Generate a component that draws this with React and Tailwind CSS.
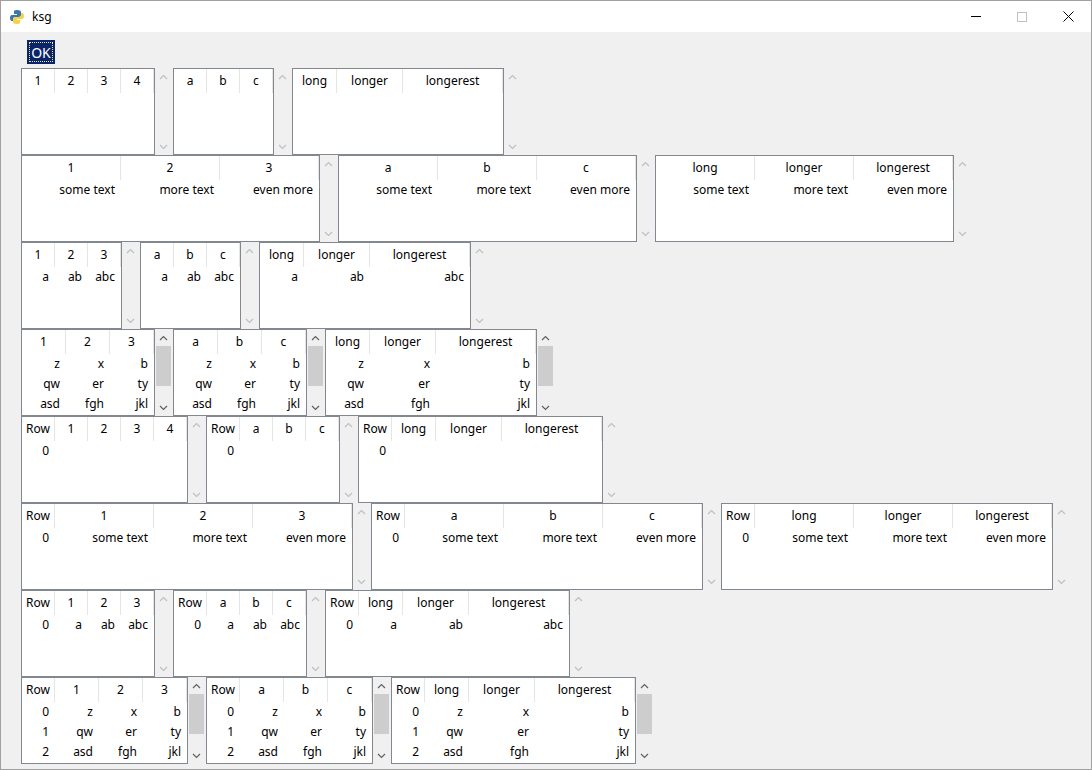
const H1 = [{ l: '1', w: 33 }, { l: '2', w: 33 }, { l: '3', w: 33 }, { l: '4', w: 33 }]
const A3 = [{ l: 'a', w: 33 }, { l: 'b', w: 33 }, { l: 'c', w: 33 }]
const N3 = [{ l: '1', w: 33 }, { l: '2', w: 33 }, { l: '3', w: 33 }]
const L3 = [{ l: 'long', w: 44 }, { l: 'longer', w: 66 }, { l: 'longerest', w: 100 }]
const wide = (c) => c.map((x) => ({ ...x, w: 99 }))
const mid = (c) => c.map((x) => ({ ...x, w: 44 }))
const ROW = { l: 'Row', w: 33 }
const withRow = (c) => [ROW, ...c]

const TEXT = [['some text', 'more text', 'even more']]
const SHORT = [['a', 'ab', 'abc']]
const MANY = [['z', 'x', 'b'], ['qw', 'er', 'ty'], ['asd', 'fgh', 'jkl']]
const idx = (rows) => rows.map((r, i) => [String(i), ...r])

const GRID = [
  [[H1, []], [A3, []], [L3, []]],
  [[wide(N3), TEXT], [wide(A3), TEXT], [wide(L3), TEXT]],
  [[N3, SHORT], [A3, SHORT], [L3, SHORT]],
  [[mid(N3), MANY, true], [mid(A3), MANY, true], [L3, MANY, true]],
  [[withRow(H1), [['0']]], [withRow(A3), [['0']]], [withRow(L3), [['0']]]],
  [[withRow(wide(N3)), idx(TEXT)], [withRow(wide(A3)), idx(TEXT)], [withRow(wide(L3)), idx(TEXT)]],
  [[withRow(N3), idx(SHORT)], [withRow(A3), idx(SHORT)], [withRow(L3), idx(SHORT)]],
  [[withRow(mid(N3)), idx(MANY), true], [withRow(mid(A3)), idx(MANY), true], [withRow(L3), idx(MANY), true]],
]

function Chevron({ up, active }) {
  return (
    <svg width="9" height="6" viewBox="0 0 9 6" fill="none" stroke={active ? '#606060' : '#bfbfbf'} strokeWidth="1.2">
      <path d={up ? 'M1 5 L4.5 1.5 L8 5' : 'M1 1 L4.5 4.5 L8 1'} />
    </svg>
  )
}

function Scrollbar({ active }) {
  return (
    <div className="w-[17px] h-[87px] bg-[#f0f0f0] flex flex-col items-center mr-[1px]">
      <div className="h-[17px] flex items-center justify-center"><Chevron up active={active} /></div>
      <div className="flex-1 w-full">
        {active && <div className="mx-[1px] h-[40px] bg-[#cdcdcd]" />}
      </div>
      <div className="h-[17px] flex items-center justify-center"><Chevron active={active} /></div>
    </div>
  )
}

function Table({ cols, rows, active }) {
  return (
    <div className="flex shrink-0">
      <div className="h-[87px] border border-[#828790] bg-white overflow-hidden">
        <div className="flex h-[24px]">
          {cols.map((c, i) => (
            <div key={i} style={{ width: c.w }} className="shrink-0 border-r border-[#e5e5e5] flex items-center justify-center">
              {c.l}
            </div>
          ))}
        </div>
        {rows.map((r, ri) => (
          <div key={ri} className="flex h-[20px]">
            {r.map((v, i) => (
              <div key={i} style={{ width: cols[i].w }} className="shrink-0 text-right pr-[6px] leading-[20px]">
                {v}
              </div>
            ))}
          </div>
        ))}
      </div>
      <Scrollbar active={active} />
    </div>
  )
}

export default function App() {
  return (
    <div className="w-[1092px] h-[770px] overflow-hidden border border-[#a0a0a0] bg-[#f0f0f0] text-[12px] text-black font-['Noto_Sans','Liberation_Sans',sans-serif]">
      <div className="h-[31px] bg-white flex items-center">
        <svg width="16" height="16" viewBox="0 0 16 16" className="ml-[8px]">
          <path d="M8 1c-3 0-3 1-3 2v2h3v1H3c-1.5 0-2 1.5-2 3s.5 3 2 3h1V10c0-1 1-2 2-2h4c1 0 2-1 2-2V3c0-1-1-2-4-2z" fill="#3b77a8" />
          <path d="M8 15c3 0 3-1 3-2v-2H8v-1h5c1.5 0 2-1.5 2-3s-.5-3-2-3h-1v2c0 1-1 2-2 2H6c-1 0-2 1-2 2v3c0 1 1 2 4 2z" fill="#f5d248" />
        </svg>
        <span className="ml-[7px] text-[12px]">ksg</span>
        <div className="ml-auto flex items-center h-full">
          <div className="w-[46px] flex justify-center"><div className="w-[10px] h-px bg-black" /></div>
          <div className="w-[46px] flex justify-center"><div className="w-[10px] h-[10px] border border-[#c0c0c0]" /></div>
          <div className="w-[46px] flex justify-center">
            <svg width="11" height="11" viewBox="0 0 11 11" stroke="#000" strokeWidth="1"><path d="M0.5 0.5 L10.5 10.5 M10.5 0.5 L0.5 10.5" /></svg>
          </div>
        </div>
      </div>
      <div className="pl-[20px] pt-[8px]">
        <div className="ml-[6px] mb-[4px] w-[28px] h-[24px] bg-[#0a246a] p-[2px]">
          <div className="w-full h-full border border-dotted border-[#f0e68c] text-white text-[14px] flex items-center justify-center">OK</div>
        </div>
        {GRID.map((row, i) => (
          <div key={i} className="flex">
            {row.map(([cols, rows, active], j) => (
              <Table key={j} cols={cols} rows={rows} active={active} />
            ))}
          </div>
        ))}
      </div>
    </div>
  )
}
